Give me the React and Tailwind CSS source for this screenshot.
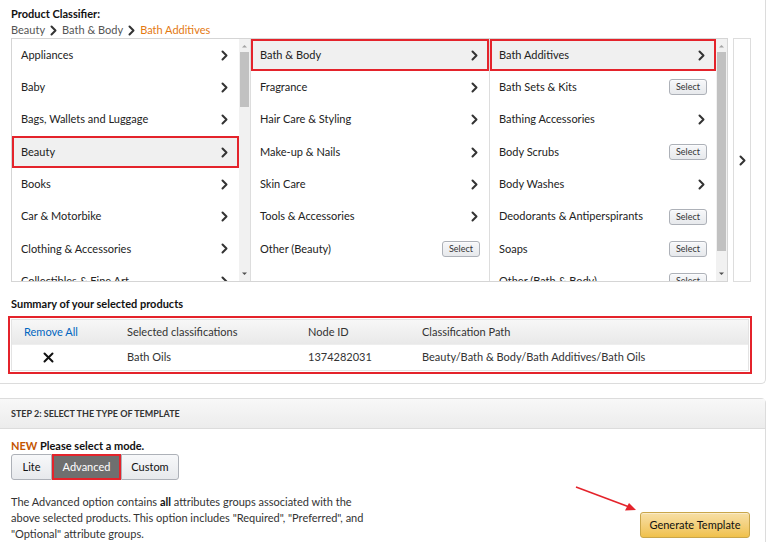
import React from "react";

const Chev = ({ className = "" }) => (
  <svg width="7" height="11" viewBox="0 0 7 11" className={className}>
    <path d="M1.5 1.5 L5.5 5.5 L1.5 9.5" fill="none" stroke="#333" strokeWidth="2" strokeLinecap="round" strokeLinejoin="round" />
  </svg>
);

const SelectBtn = () => (
  <div className="h-[16px] w-[38px] rounded-[3px] border border-[#adb1b8] bg-gradient-to-b from-[#f7f8fa] to-[#e7e9ec] text-[9px] leading-[14px] text-center text-[#333] shadow-[0_1px_0_rgba(255,255,255,0.6)_inset]">
    Select
  </div>
);

const Row = ({ label, kind, active }) => (
  <div
    className={
      "h-[32.3px] shrink-0 flex items-center justify-between pl-[9px] text-[#222] " +
      (active ? "bg-[#f0f0f0] shadow-[inset_0_0_0_2px_#e4232b] " : "") +
      (kind === "select" ? "pr-[9px]" : "pr-[11px]")
    }
  >
    <span className="whitespace-nowrap">{label}</span>
    {kind === "select" ? <SelectBtn /> : <Chev />}
  </div>
);

const Scrollbar = ({ thumbTop, thumbHeight }) => (
  <div className="relative w-[11px] shrink-0 bg-[#f1f1f1]">
    <svg width="11" height="8" className="absolute top-[3px] left-0" viewBox="0 0 11 8">
      <path d="M3 5.5 L5.5 3 L8 5.5 Z" fill="#a3a3a3" />
    </svg>
    <div className="absolute left-[1px] right-[1px] bg-[#c1c1c1]" style={{ top: thumbTop, height: thumbHeight }} />
    <svg width="11" height="8" className="absolute bottom-[3px] left-0" viewBox="0 0 11 8">
      <path d="M3 2.5 L8 2.5 L5.5 5 Z" fill="#505050" />
    </svg>
  </div>
);

const col1 = [
  ["Appliances", "chev"],
  ["Baby", "chev"],
  ["Bags, Wallets and Luggage", "chev"],
  ["Beauty", "chev", true],
  ["Books", "chev"],
  ["Car & Motorbike", "chev"],
  ["Clothing & Accessories", "chev"],
  ["Collectibles & Fine Art", "chev"],
];
const col2 = [
  ["Bath & Body", "chev", true],
  ["Fragrance", "chev"],
  ["Hair Care & Styling", "chev"],
  ["Make-up & Nails", "chev"],
  ["Skin Care", "chev"],
  ["Tools & Accessories", "chev"],
  ["Other (Beauty)", "select"],
];
const col3 = [
  ["Bath Additives", "chev", true],
  ["Bath Sets & Kits", "select"],
  ["Bathing Accessories", "chev"],
  ["Body Scrubs", "select"],
  ["Body Washes", "chev"],
  ["Deodorants & Antiperspirants", "select"],
  ["Soaps", "select"],
  ["Other (Bath & Body)", "select"],
];

export default function App() {
  return (
    <div className="relative w-[768px] h-[545px] overflow-hidden bg-white text-[#111] text-[11px] font-['Lato',sans-serif]">
      {/* Card 1 */}
      <div className="w-[766px] h-[384px] border-r border-b border-[#dcdcdc] rounded-br-[5px] pl-[11px] pr-[14px] pt-[7px]">
        <div className="font-bold leading-[14px] text-[#111]">Product Classifier:</div>
        <div className="flex items-center gap-[5px] leading-[16px] text-[#555] mt-[1px]">
          <span>Beauty</span>
          <Chev />
          <span>Bath &amp; Body</span>
          <Chev />
          <span className="text-[#e47911]">Bath Additives</span>
        </div>
        <div className="flex mt-0 h-[244px]">
          <div className="flex border border-[#d5d5d5] bg-white">
            <div className="flex w-[239px] border-r border-[#ddd]">
              <div className="flex flex-col flex-1 overflow-hidden">
                {col1.map(([l, k, a]) => (
                  <Row key={l} label={l} kind={k} active={a} />
                ))}
              </div>
              <Scrollbar thumbTop={13} thumbHeight={55} />
            </div>
            <div className="flex w-[239px] border-r border-[#ddd]">
              <div className="flex flex-col flex-1 overflow-hidden">
                {col2.map(([l, k, a]) => (
                  <Row key={l} label={l} kind={k} active={a} />
                ))}
              </div>
            </div>
            <div className="flex w-[237px]">
              <div className="flex flex-col flex-1 overflow-hidden">
                {col3.map(([l, k, a]) => (
                  <Row key={l} label={l} kind={k} active={a} />
                ))}
              </div>
              <Scrollbar thumbTop={13} thumbHeight={199} />
            </div>
          </div>
          <div className="ml-[5px] w-[18px] border border-[#ddd] bg-white flex items-center justify-center">
            <Chev />
          </div>
        </div>

        <div className="font-bold leading-[14px] mt-[15px] text-[#111]">Summary of your selected products</div>
        <div className="-ml-[3px] -mr-[1px] mt-[5px] border-2 border-[#e4232b] p-[1px]">
          <div className="border border-[#e3e3e3]">
            <div className="flex h-[24px] items-center bg-gradient-to-b from-[#f7f7f7] to-[#e9e9e9] text-[#333]">
              <div className="w-[115px] pl-[12px] text-[#0066c0]">Remove All</div>
              <div className="w-[181px]">Selected classifications</div>
              <div className="w-[114px]">Node ID</div>
              <div className="flex-1">Classification Path</div>
            </div>
            <div className="flex h-[26px] items-center bg-white text-[#333] border-t border-[#eee]">
              <div className="w-[115px] pl-[31px]">
                <svg width="11" height="11" viewBox="0 0 11 11">
                  <path d="M1.5 1.5 L9.5 9.5 M9.5 1.5 L1.5 9.5" stroke="#111" strokeWidth="2" strokeLinecap="round" />
                </svg>
              </div>
              <div className="w-[181px]">Bath Oils</div>
              <div className="w-[114px]">1374282031</div>
              <div className="flex-1">Beauty/Bath &amp; Body/Bath Additives/Bath Oils</div>
            </div>
          </div>
        </div>
      </div>

      {/* Card 2 */}
      <div className="mt-[14px] w-[766px] border-r border-t border-[#dcdcdc] rounded-tr-[5px]">
        <div className="h-[30px] flex items-center pl-[11px] bg-gradient-to-b from-[#f8f8f8] to-[#ececec] border-b border-[#dcdcdc] text-[9px] font-bold text-[#333] uppercase">
          Step 2: Select the type of template
        </div>
        <div className="pl-[11px] pr-[15px] pt-[10px]">
          <div className="font-bold leading-[14px] text-[#111]">
            <span className="text-[#c45500]">NEW</span> Please select a mode.
          </div>
          <div className="mt-[1px] flex h-[26px] w-fit rounded-[3px]">
            <div className="w-[41px] flex items-center justify-center border border-[#adb1b8] rounded-l-[3px] bg-gradient-to-b from-[#f7f8fa] to-[#e7e9ec] text-[#111]">Lite</div>
            <div className="w-[69px] flex items-center justify-center border-2 border-[#e4232b] bg-[#6f6f6f] text-white">Advanced</div>
            <div className="w-[58px] flex items-center justify-center border border-[#adb1b8] rounded-r-[3px] bg-gradient-to-b from-[#f7f8fa] to-[#e7e9ec] text-[#111]">Custom</div>
          </div>
          <div className="flex items-end justify-between mt-[14px]">
            <p className="w-[372px] leading-[16px] text-[#333]">
              The Advanced option contains <b className="text-[#111]">all</b> attributes groups associated with the above selected products. This option includes "Required", "Preferred", and "Optional" attribute groups.
            </p>
            <div className="mb-[4px] h-[26px] w-[110px] flex items-center justify-center rounded-[3px] border border-[#c9a64a] bg-gradient-to-b from-[#f7dfa5] to-[#f0c14b] text-[#111] shadow-[0_1px_0_rgba(255,255,255,0.4)_inset]">
              Generate Template
            </div>
          </div>
        </div>
      </div>

      {/* Annotation arrow */}
      <svg className="absolute left-[570px] top-[480px]" width="72" height="36" viewBox="0 0 72 36">
        <path d="M6 7 L62 28" stroke="#e4232b" strokeWidth="1.6" />
        <path d="M66 30 L55 30.5 L59 23 Z" fill="#e4232b" />
      </svg>
    </div>
  );
}
